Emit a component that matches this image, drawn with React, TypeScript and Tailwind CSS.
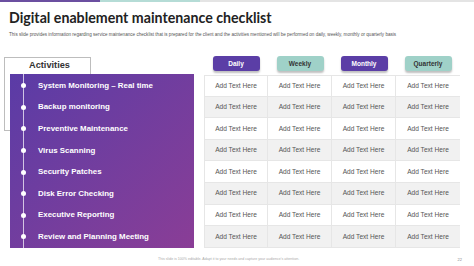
import React from 'react';

const activities = [
  'System Monitoring – Real time',
  'Backup monitoring',
  'Preventive Maintenance',
  'Virus Scanning',
  'Security Patches',
  'Disk Error Checking',
  'Executive Reporting',
  'Review and Planning Meeting',
];

const periods = [
  { label: 'Daily', purple: true },
  { label: 'Weekly', purple: false },
  { label: 'Monthly', purple: true },
  { label: 'Quarterly', purple: false },
];

const App: React.FC = () => {
  return (
    <div className="w-[474px] h-[266px] bg-white overflow-hidden flex flex-col font-['Liberation_Sans',Arial,sans-serif]">
      {/* top colour strip */}
      <div className="flex h-[2px]">
        <div className="w-[100px] bg-[#6b4fa0]" />
        <div className="w-[100px] bg-[#b5dcd6]" />
        <div className="flex-1 bg-[#e4e4e4]" />
      </div>

      <h1 className="mt-[6px] ml-[9px] text-[14.2px] leading-[18px] font-bold text-[#222] font-['Lato',sans-serif] scale-y-[1.12] origin-left">
        Digital enablement maintenance checklist
      </h1>
      <p className="mt-[6px] ml-[9px] text-[4.6px] leading-[6px] text-[#555]">
        This slide provides information regarding service maintenance checklist that is prepared for the client and the activities mentioned will be performed on daily, weekly, monthly or quarterly basis
      </p>

      <div className="flex mt-[18px] ml-[4px]">
        {/* activities column */}
        <div className="relative w-[190px] h-[194px]">
          <div className="absolute left-0 top-[1px] w-[87px] h-[74px] border border-[#bdbdbd]" />
          <div className="absolute left-[4px] top-[1px] w-[83px] h-[17px] flex items-center justify-center text-[9.2px] font-bold text-[#333]">
            Activities
          </div>
          <div className="absolute left-[6px] top-[18px] w-[184px] h-[174px] bg-gradient-to-br from-[#5a3ba6] to-[#8a3d96]">
            <div className="absolute left-[13px] top-0 bottom-[-4px] w-px bg-white/70" />
            <ul className="flex flex-col pt-[1px]">
              {activities.map((a) => (
                <li key={a} className="h-[21.6px] flex items-center">
                  <span className="ml-[11px] w-[5px] h-[5px] rounded-full bg-white shrink-0" />
                  <span className="ml-[12px] text-[7.9px] font-bold text-white">{a}</span>
                </li>
              ))}
            </ul>
          </div>
        </div>

        {/* schedule table */}
        <div className="ml-[10px] w-[256px] flex flex-col">
          <div className="grid grid-cols-4 h-[19px]">
            {periods.map((p) => (
              <div key={p.label} className="flex justify-center">
                <div
                  className={`w-[47px] h-[15px] rounded-[3px] flex items-center justify-center text-[6.5px] font-bold shadow-[0_2px_2px_rgba(0,0,0,0.25)] ${
                    p.purple ? 'bg-[#5b3ea6] text-white' : 'bg-[#9fd1c8] text-[#333]'
                  }`}
                >
                  {p.label}
                </div>
              </div>
            ))}
          </div>
          <div className="flex flex-col">
            {activities.map((a, i) => (
              <div key={a} className={`grid grid-cols-4 h-[21.6px] ${i % 2 === 1 ? 'bg-[#f1f1f1]' : 'bg-white'}`}>
                {periods.map((p, j) => (
                  <div
                    key={p.label}
                    className={`flex items-center justify-center text-[6.6px] text-[#555] border-[#e6e6e6] border-b ${j < 3 ? 'border-r' : ''} ${j === 0 ? 'border-l' : ''} ${i === 0 ? 'border-t' : ''}`}
                  >
                    Add Text Here
                  </div>
                ))}
              </div>
            ))}
          </div>
        </div>
      </div>

      <div className="relative mt-auto h-[10px]">
        <p className="absolute left-[158px] top-[1px] text-[3.6px] text-[#aaa]">
          This slide is 100% editable. Adapt it to your needs and capture your audience's attention.
        </p>
        <span className="absolute right-[12px] top-[1px] text-[4px] text-[#888]">22</span>
      </div>
    </div>
  );
};

export default App;
